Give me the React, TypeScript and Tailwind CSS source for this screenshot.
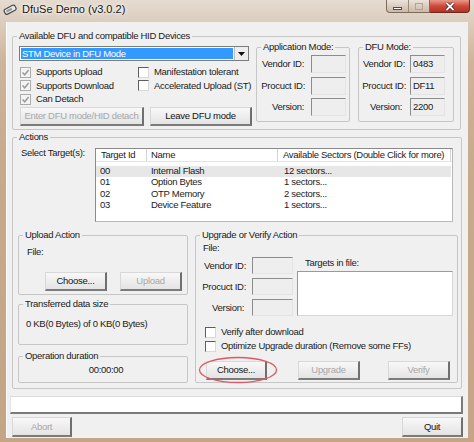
import React from "react";

type P = { children?: React.ReactNode; className?: string };

function Group({ label, className = "", children }: P & { label: string }) {
  return (
    <fieldset className={`min-w-0 rounded-[2px] border border-[#c6c6c6] ${className}`}>
      <legend className="ml-[4px] px-[2px] leading-[10px] text-[#1b1b1b]">{label}</legend>
      {children}
    </fieldset>
  );
}

function Btn({ children, disabled, className = "" }: P & { disabled?: boolean }) {
  return (
    <div
      className={`flex items-center justify-center border-t border-l border-r-2 border-b-2 border-t-[#d8d8d8] border-l-[#d8d8d8] border-r-[#6f6f6f] border-b-[#7b7b7b] bg-linear-to-b from-[#f8f8f8] to-[#e4e4e4] ${
        disabled ? "text-[#a8a8a8]" : "text-[#141414]"
      } ${className}`}
    >
      {children}
    </div>
  );
}

function Field({ value, className = "" }: { value?: string; className?: string }) {
  return (
    <div
      className={`flex items-center border border-t-[#8c8c8c] border-l-[#8c8c8c] border-r-[#e4e4e4] border-b-[#e4e4e4] bg-[#eeeeee] pl-[2px] text-[#1b1b1b] ${className}`}
    >
      {value}
    </div>
  );
}

function Check({ checked, disabled }: { checked?: boolean; disabled?: boolean }) {
  if (disabled) {
    return (
      <div className="flex h-[11px] w-[11px] items-center justify-center border border-[#ababab] bg-[#f3f3f3]">
        {checked && (
          <svg width="9" height="9" viewBox="0 0 9 9">
            <polyline points="1.5,4.5 3.7,6.8 7.6,2" fill="none" stroke="#9c9c9c" strokeWidth="1.5" />
          </svg>
        )}
      </div>
    );
  }
  return (
    <div className="h-[11px] w-[11px] border border-t-[#5e5e5e] border-l-[#5e5e5e] border-r-[#d8d8d8] border-b-[#d8d8d8] bg-white" />
  );
}

function CheckRow({ label, checked, disabled, className = "" }: { label: string; checked?: boolean; disabled?: boolean; className?: string }) {
  return (
    <div className={`flex items-center ${className}`}>
      <Check checked={checked} disabled={disabled} />
      <span className="ml-[5px] text-[#1b1b1b]">{label}</span>
    </div>
  );
}

function IdRow({ label, value, labelW, boxW, gap, h }: { label: string; value?: string; labelW: string; boxW: string; gap: string; h: string }) {
  return (
    <div className={`flex items-center ${h}`}>
      <div className={`${labelW} text-right text-[#1b1b1b]`}>{label}</div>
      <Field value={value} className={`${gap} ${boxW} ${h}`} />
    </div>
  );
}

const targets = [
  ["00", "Internal Flash", "12 sectors..."],
  ["01", "Option Bytes", "1 sectors..."],
  ["02", "OTP Memory", "2 sectors..."],
  ["03", "Device Feature", "1 sectors..."],
];

export default function App() {
  return (
    <div className="flex h-[442px] w-[474px] flex-col overflow-hidden bg-[linear-gradient(180deg,#e4dbd1_0%,#dccdbd_5%,#cdb49b_14%,#c7a98c_40%,#c4a586_100%)] font-['Liberation_Sans',Arial,sans-serif] text-[9.5px] leading-[10px] tracking-[-0.3px] text-[#1b1b1b]">
      {/* Title bar */}
      <div className="flex h-[22px] items-start">
        <svg className="ml-[3px] mt-[4px]" width="14" height="11" viewBox="0 0 14 11">
          <g transform="rotate(-28 7 5.5)">
            <rect x="1" y="3" width="12" height="5.5" rx="1.8" fill="#e9e9e9" stroke="#4a4a4a" strokeWidth="1.2" />
            <rect x="3" y="4.6" width="6" height="2.2" fill="#9a9a9a" />
          </g>
        </svg>
        <div className="ml-[5px] mt-[3px] text-[11px] leading-[13px] tracking-[0px] text-[#161616] [text-shadow:0_0_5px_#fff,0_0_3px_#fff]">
          DfuSe Demo (v3.0.2)
        </div>
        <div className="ml-auto mr-[4px] flex h-[13px]">
          <div className="flex w-[44px] overflow-hidden rounded-bl-[4px] border border-t-0 border-[#7c6c5e] bg-linear-to-b from-[#ebe3da] to-[#cbb9a7]">
            <div className="flex w-[22px] items-end justify-center border-r border-[#9b8b7b] pb-[2px]">
              <div className="h-[3px] w-[9px] border border-[#4d4d4d] bg-white" />
            </div>
            <div className="flex flex-1 items-center justify-center">
              <div className="h-[7px] w-[8px] border border-[#b3a393]" />
            </div>
          </div>
          <div className="flex w-[40px] items-center justify-center rounded-br-[4px] border border-l-0 border-t-0 border-[#6b2a20] bg-linear-to-b from-[#e9998a] via-[#cc4a3c] to-[#b7321f]">
            <svg width="10" height="9" viewBox="0 0 10 9">
              <path d="M1.5 1 L8.5 8 M8.5 1 L1.5 8" stroke="#3a1a16" strokeWidth="3.2" />
              <path d="M1.5 1 L8.5 8 M8.5 1 L1.5 8" stroke="#ffffff" strokeWidth="1.8" />
            </svg>
          </div>
        </div>
      </div>

      {/* Client area */}
      <div className="ml-[6px] flex h-[416px] w-[462px] flex-col border-l border-white bg-[#f0f0f0] pl-[5px] pt-[9px]">
        {/* Available DFU group */}
        <Group label="Available DFU and compatible HID Devices" className="h-[99px] w-[449px]">
          <div className="flex pl-[6px]">
            <div className="flex w-[233px] flex-col">
              <div className="mt-[5px] flex h-[15px] w-[230px] border border-[#7c7c7c] bg-white">
                <div className="m-[1px] flex flex-1 items-center bg-[#3399ff] pl-[1px] text-white">STM Device in DFU Mode</div>
                <div className="flex w-[14px] items-center justify-center border-l border-[#bcbcbc] bg-[#ededed]">
                  <svg width="7" height="4" viewBox="0 0 7 4">
                    <path d="M0 0 L7 0 L3.5 4 Z" fill="#111" />
                  </svg>
                </div>
              </div>
              <div className="ml-[1px] mt-[4.5px] grid grid-cols-[118px_1fr] grid-rows-[13.5px_13.5px_13.5px]">
                <CheckRow label="Supports Upload" checked disabled />
                <CheckRow label="Manifestation tolerant" />
                <CheckRow label="Supports Download" checked disabled />
                <CheckRow label="Accelerated Upload (ST)" />
                <CheckRow label="Can Detach" checked disabled />
              </div>
              <div className="ml-[1px] mt-[1px] flex">
                <Btn disabled className="h-[19px] w-[124px]">Enter DFU mode/HID detach</Btn>
                <Btn className="ml-[6px] h-[19px] w-[102px]">Leave DFU mode</Btn>
              </div>
            </div>
            <Group label="Application Mode:" className="ml-[4px] mt-[1px] h-[80px] w-[94px]">
              <div className="flex flex-col pt-[3px]">
                <IdRow label="Vendor ID:" labelW="w-[49px] pr-[2px]" boxW="w-[35px]" gap="ml-[5px]" h="h-[18px]" />
                <div className="mt-[4px]">
                  <IdRow label="Procuct ID:" labelW="w-[49px] pr-[1px]" boxW="w-[35px]" gap="ml-[5px]" h="h-[18px]" />
                </div>
                <div className="mt-[3px]">
                  <IdRow label="Version:" labelW="w-[49px] pr-[2px]" boxW="w-[35px]" gap="ml-[5px]" h="h-[18px]" />
                </div>
              </div>
            </Group>
            <Group label="DFU Mode:" className="ml-[8px] mt-[1px] h-[80px] w-[96px]">
              <div className="flex flex-col pt-[3px]">
                <IdRow label="Vendor ID:" value="0483" labelW="w-[47px] pr-[1px]" boxW="w-[35px]" gap="ml-[4px]" h="h-[18px]" />
                <div className="mt-[4px]">
                  <IdRow label="Procuct ID:" value="DF11" labelW="w-[47px]" boxW="w-[35px]" gap="ml-[4px]" h="h-[18px]" />
                </div>
                <div className="mt-[3px]">
                  <IdRow label="Version:" value="2200" labelW="w-[47px] pr-[4px]" boxW="w-[35px]" gap="ml-[4px]" h="h-[18px]" />
                </div>
              </div>
            </Group>
          </div>
        </Group>

        {/* Actions group */}
        <Group label="Actions" className="mt-[2px] h-[257px] w-[450px]">
          <div className="flex pl-[8px] pt-[6px]">
            <div className="w-[74px] pt-[0px]">Select Target(s):</div>
            <div className="h-[74px] w-[358px] border border-[#8a8a8a] border-r-[#b9b9b9] border-b-[#b9b9b9] bg-white">
              <div className="flex h-[13px] border-b border-[#e3e3e3]">
                <div className="flex w-[51px] items-center border-r border-[#d4d4d4] pl-[5px]">Target Id</div>
                <div className="flex w-[131px] items-center border-r border-[#d4d4d4] pl-[4px]">Name</div>
                <div className="flex w-[173px] items-center border-r border-[#d4d4d4] pl-[5px]">Available Sectors (Double Click for more)</div>
              </div>
              <div className="pt-[3.5px]">
                {targets.map((t, i) => (
                  <div key={t[0]} className={`flex h-[11.3px] w-[355px] items-center ${i === 0 ? "bg-[#e7e7e7]" : ""}`}>
                    <div className="w-[51px] pl-[4px]">{t[0]}</div>
                    <div className="w-[131px] pl-[4px]">{t[1]}</div>
                    <div className="w-[173px] pl-[6px]">{t[2]}</div>
                  </div>
                ))}
              </div>
            </div>
          </div>

          <div className="mt-[8px] flex pl-[5px]">
            <div className="flex w-[170px] flex-col">
              <Group label="Upload Action" className="h-[65px] w-[170px]">
                <div className="flex flex-col pl-[8px]">
                  <div className="mt-[7px]">File:</div>
                  <div className="mt-[15px] flex">
                    <Btn className="ml-[18px] h-[19px] w-[62px]">Choose...</Btn>
                    <Btn disabled className="ml-[13px] h-[19px] w-[62px]">Upload</Btn>
                  </div>
                </div>
              </Group>
              <Group label="Transferred data size" className="mt-[4px] h-[46px] w-[170px]">
                <div className="mt-[10px] pl-[7px]">0 KB(0 Bytes) of 0 KB(0 Bytes)</div>
              </Group>
              <Group label="Operation duration" className="mt-[6px] h-[32px] w-[170px]">
                <div className="mt-[4px] pl-[6px] text-center">00:00:00</div>
              </Group>
            </div>

            <Group label="Upgrade or Verify Action" className="ml-[7px] h-[153px] w-[263px]">
              <div className="flex flex-col pl-[7px]">
                <div className="mt-[3px]">File:</div>
                <div className="mt-[4px] flex">
                  <div className="-ml-[7px] flex flex-col gap-[4px]">
                    <IdRow label="Vendor ID:" labelW="w-[51px] pr-[1px]" boxW="w-[41px]" gap="ml-[5px]" h="h-[17px]" />
                    <IdRow label="Procuct ID:" labelW="w-[51px] pr-[1px]" boxW="w-[41px]" gap="ml-[5px]" h="h-[17px]" />
                    <IdRow label="Version:" labelW="w-[51px] pr-[3px]" boxW="w-[41px]" gap="ml-[5px]" h="h-[17px]" />
                  </div>
                  <div className="ml-[4px] flex flex-col">
                    <div className="mt-[1px] pl-[8px]">Targets in file:</div>
                    <div className="mt-[3px] h-[45px] w-[156px] border border-t-[#9a9a9a] border-l-[#9a9a9a] border-r-[#d6d6d6] border-b-[#d6d6d6] bg-white" />
                  </div>
                </div>
                <div className="ml-[2px] mt-[9px] flex flex-col">
                  <CheckRow label="Verify after download" className="h-[14px]" />
                  <CheckRow label="Optimize Upgrade duration (Remove some FFs)" className="h-[14px]" />
                </div>
                <div className="mt-[8px] flex">
                  <div className="relative ml-[3px]">
                    <Btn className="h-[19px] w-[61px]">Choose...</Btn>
                    <svg className="absolute -left-[8px] -top-[5px]" width="80" height="28" viewBox="0 0 80 28">
                      <ellipse cx="40" cy="14" rx="38.5" ry="12.5" fill="none" stroke="#db5a66" strokeWidth="1.3" />
                    </svg>
                  </div>
                  <Btn disabled className="ml-[31px] h-[19px] w-[62px]">Upgrade</Btn>
                  <Btn disabled className="ml-[28px] h-[19px] w-[62px]">Verify</Btn>
                </div>
              </div>
            </Group>
          </div>
        </Group>

        {/* Status field */}
        <div className="-ml-[2px] mt-[7px] h-[18px] w-[453px] border-t border-l border-r-2 border-b-2 border-t-[#dadada] border-l-[#e6e6e6] border-r-[#7a7a7a] border-b-[#7a7a7a] bg-white" />

        {/* Bottom buttons */}
        <div className="mt-[3px] flex w-[451px] justify-between">
          <Btn disabled className="h-[20px] w-[60px]">Abort</Btn>
          <Btn className="h-[20px] w-[61px]">Quit</Btn>
        </div>
      </div>
    </div>
  );
}
